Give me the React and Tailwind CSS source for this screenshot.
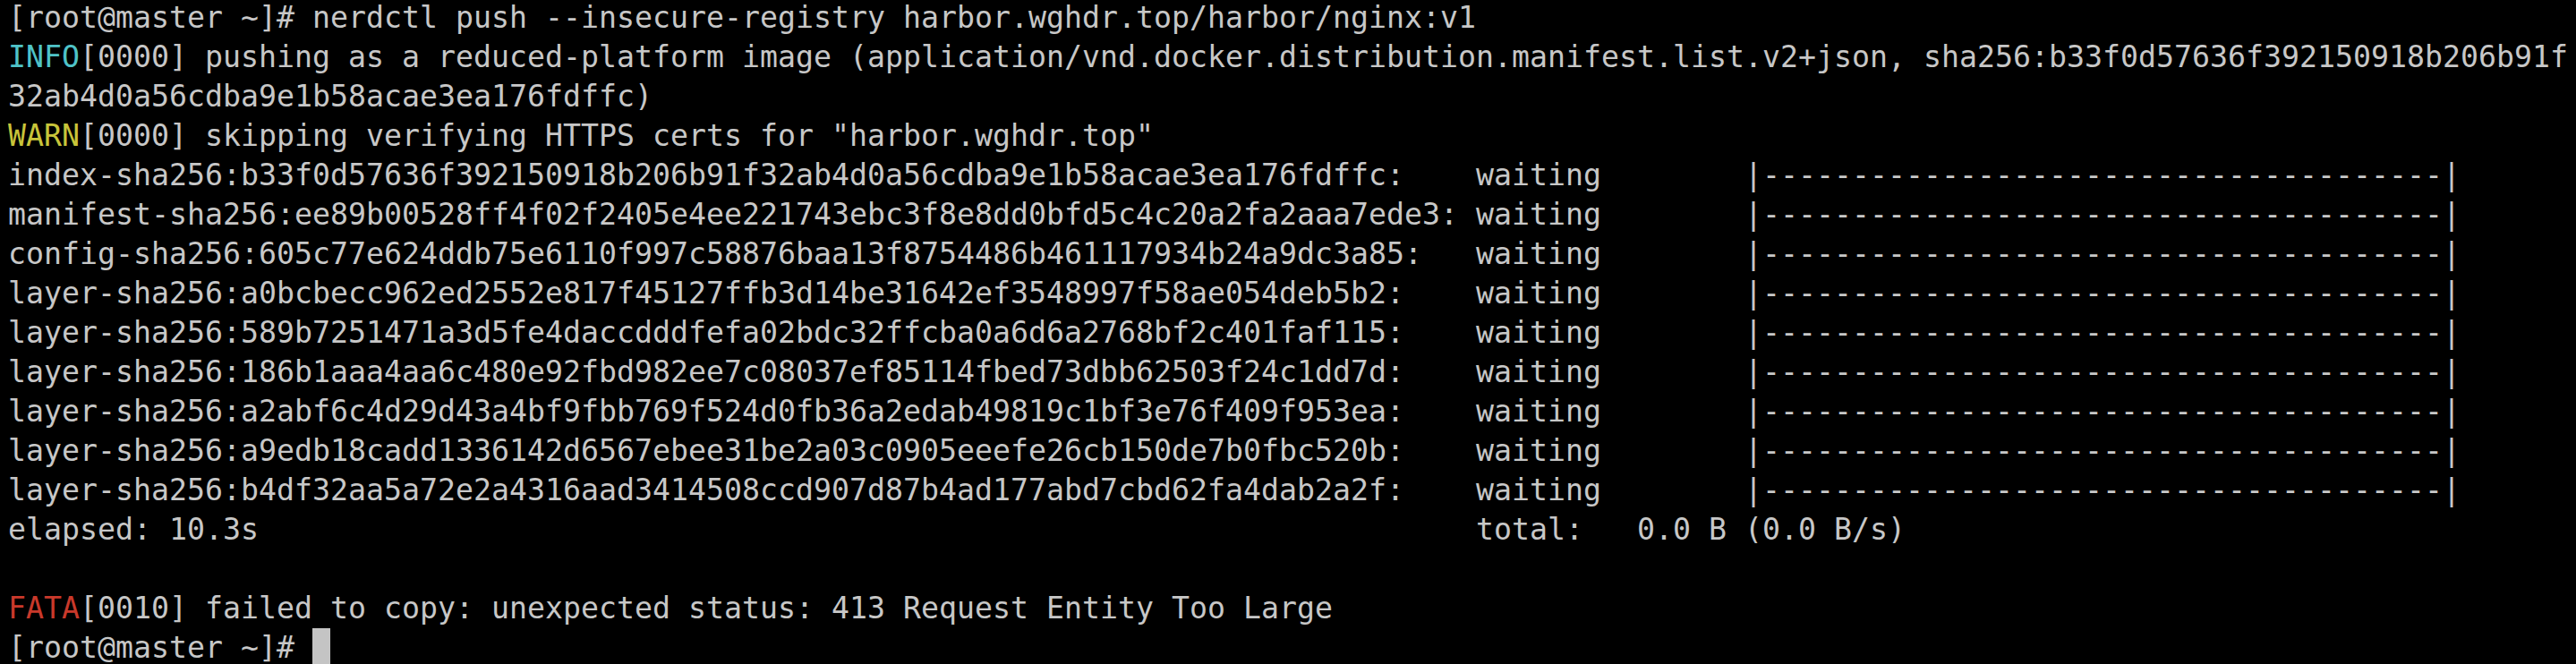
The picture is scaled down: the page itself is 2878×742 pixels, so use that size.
const refs = [
  "index-sha256:b33f0d57636f392150918b206b91f32ab4d0a56cdba9e1b58acae3ea176fdffc:",
  "manifest-sha256:ee89b00528ff4f02f2405e4ee221743ebc3f8e8dd0bfd5c4c20a2fa2aaa7ede3:",
  "config-sha256:605c77e624ddb75e6110f997c58876baa13f8754486b461117934b24a9dc3a85:",
  "layer-sha256:a0bcbecc962ed2552e817f45127ffb3d14be31642ef3548997f58ae054deb5b2:",
  "layer-sha256:589b7251471a3d5fe4daccdddfefa02bdc32ffcba0a6d6a2768bf2c401faf115:",
  "layer-sha256:186b1aaa4aa6c480e92fbd982ee7c08037ef85114fbed73dbb62503f24c1dd7d:",
  "layer-sha256:a2abf6c4d29d43a4bf9fbb769f524d0fb36a2edab49819c1bf3e76f409f953ea:",
  "layer-sha256:a9edb18cadd1336142d6567ebee31be2a03c0905eeefe26cb150de7b0fbc520b:",
  "layer-sha256:b4df32aa5a72e2a4316aad3414508ccd907d87b4ad177abd7cbd62fa4dab2a2f:",
]

const bar = "|" + "-".repeat(38) + "|"

function Line({ children }) {
  return <div className="h-[44px] leading-[44px] whitespace-pre">{children}</div>
}

export default function App() {
  return (
    <div
      className="w-[2878px] h-[742px] overflow-hidden bg-black text-[#c7c7c7] text-[33.22px] pl-[9px]"
      style={{ fontFamily: '"DejaVu Sans Mono", "Liberation Mono", monospace' }}
    >
      <div className="-mt-[2px]">
        <Line>[root@master ~]# nerdctl push --insecure-registry harbor.wghdr.top/harbor/nginx:v1</Line>
        <Line>
          <span className="text-[#4fc3c8]">INFO</span>
          [0000] pushing as a reduced-platform image (application/vnd.docker.distribution.manifest.list.v2+json, sha256:b33f0d57636f392150918b206b91f
        </Line>
        <Line>32ab4d0a56cdba9e1b58acae3ea176fdffc)</Line>
        <Line>
          <span className="text-[#c8c43a]">WARN</span>
          [0000] skipping verifying HTTPS certs for "harbor.wghdr.top"
        </Line>
        {refs.map((r) => (
          <Line key={r}>{r.padEnd(82) + "waiting".padEnd(15) + bar}</Line>
        ))}
        <Line>{"elapsed: 10.3s".padEnd(82) + "total:   0.0 B ".padEnd(15) + "(0.0 B/s)"}</Line>
        <Line> </Line>
        <Line>
          <span className="text-[#c9392b]">FATA</span>
          [0010] failed to copy: unexpected status: 413 Request Entity Too Large
        </Line>
        <div className="h-[44px] leading-[44px] whitespace-pre flex items-start">
          <span>[root@master ~]# </span>
          <span className="inline-block w-[20px] h-[44px] bg-[#c4c4c4]"></span>
        </div>
      </div>
    </div>
  )
}
